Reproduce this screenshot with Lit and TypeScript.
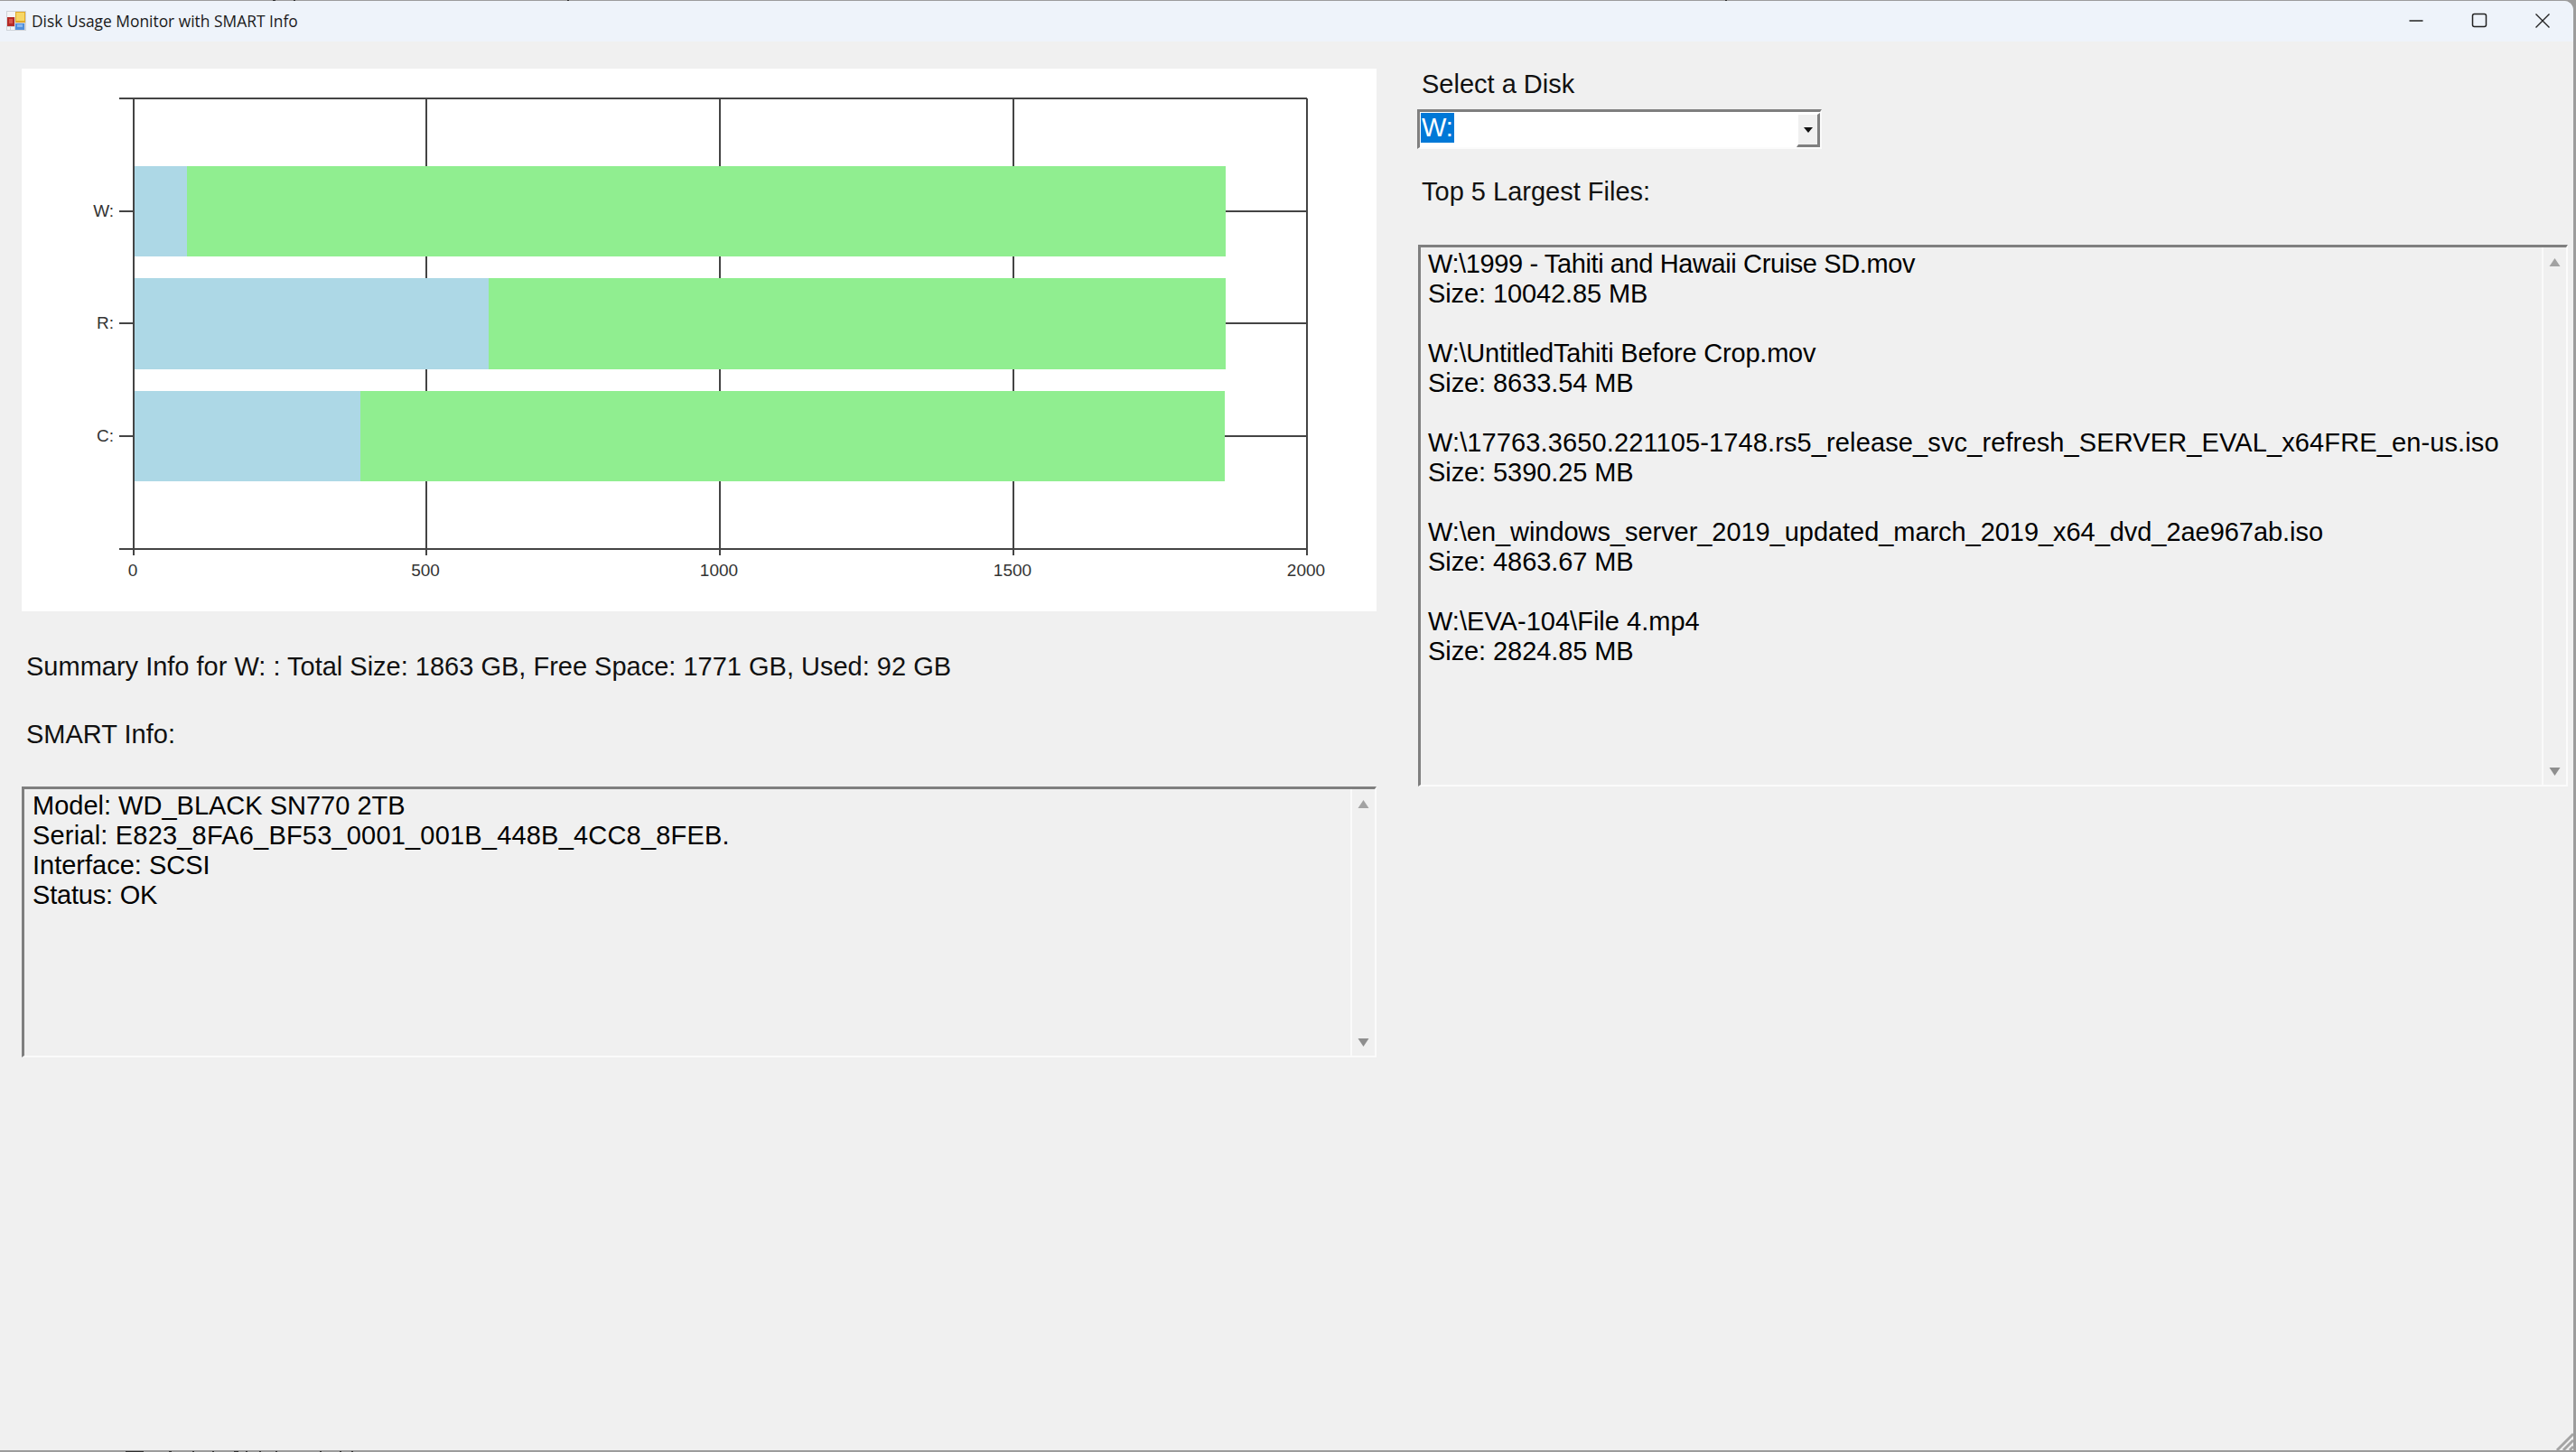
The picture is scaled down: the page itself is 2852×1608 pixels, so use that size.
import { LitElement, html, css, svg } from "lit";
import { customElement } from "lit/decorators.js";

type Line = [string, number];
const FILES: Line[][] = [
  [["W:\\1999 - Tahiti and Hawaii Cruise SD.mov", -0.39], ["Size: 10042.85 MB", -0.1]],
  [["W:\\UntitledTahiti Before Crop.mov", -0.21], ["Size: 8633.54 MB", -0.08]],
  [["W:\\17763.3650.221105-1748.rs5_release_svc_refresh_SERVER_EVAL_x64FRE_en-us.iso", 0.12], ["Size: 5390.25 MB", -0.08]],
  [["W:\\en_windows_server_2019_updated_march_2019_x64_dvd_2ae967ab.iso", -0.05], ["Size: 4863.67 MB", -0.08]],
  [["W:\\EVA-104\\File 4.mp4", 0.02], ["Size: 2824.85 MB", -0.08]],
];
const SMART: Line[] = [
  ["Model: WD_BLACK SN770 2TB", 0],
  ["Serial: E823_8FA6_BF53_0001_001B_448B_4CC8_8FEB.", 0.19],
  ["Interface: SCSI", 0],
  ["Status: OK", -0.2],
];
const DISKS = [
  { n: "W:", y: 108, h: 100, used: 58, total: 1208 },
  { n: "R:", y: 232, h: 101, used: 392, total: 1208 },
  { n: "C:", y: 357, h: 100, used: 250, total: 1207 },
];
const X0 = 124, W = 1299, TOP = 33, BOT = 532;
const BOTTOM_BITS = [[139, 20], [187, 3], [213, 2], [235, 2], [259, 5], [272, 2], [287, 2], [305, 2], [354, 2], [376, 2], [389, 2]];
const TOP_BITS = [[302, 3], [325, 2], [628, 2], [1910, 2]];

@customElement("app-root")
export class AppRoot extends LitElement {
  static styles = css`
    :host { display: block; position: relative; height: 1608px; background: #9c9c9c; overflow: hidden; font-family: "Liberation Sans", Arial, sans-serif; color: #000; }
    .window { width: 2849px; height: 1605px; margin-top: 1px; background: #f0f0f0; border-top-right-radius: 10px; display: flex; flex-direction: column; overflow: hidden; position: relative; }
    .titlebar { box-sizing: border-box; height: 45px; flex: none; background: #eef3fa; display: flex; align-items: center; padding: 0 0 1px 7px; }
    .app-icon { width: 22px; height: 22px; flex: none; }
    .title { font: 17.4px "Open Sans", sans-serif; color: #1a1a1a; margin-left: 6px; flex: 1; white-space: nowrap; }
    .caps { display: flex; align-items: center; margin-right: -1px; }
    .cap { width: 70px; height: 44px; display: flex; align-items: center; justify-content: center; }
    .cap svg { width: 18px; height: 18px; }
    .body { flex: 1; display: grid; grid-template-columns: 1500px 1273px; column-gap: 46px; padding: 30px 0 0 24px; align-items: start; }
    .left, .right { display: flex; flex-direction: column; }
    .chart { display: block; width: 1500px; height: 601px; background: #fff; }
    .chart text { font: 19px "Liberation Sans", sans-serif; fill: #333; }
    .axis { stroke: #444; stroke-width: 2; }
    .label { font-size: 29px; line-height: 33px; white-space: nowrap; color: #111; }
    .summary { margin: 45px 0 0 5px; }
    .smart-label { margin: 42px 0 0 5px; }
    .box { position: relative; box-sizing: border-box; background: #f0f0f0; border-top: 3px solid #7f7f7f; border-left: 3px solid #7f7f7f; border-right: 2px solid #fbfbfb; border-bottom: 2px solid #fbfbfb; font-size: 29px; line-height: 33px; white-space: pre; color: #000; overflow: hidden; display: flex; }
    .smart-box { margin-top: 41px; height: 300px; }
    .files-box { margin-top: 42px; height: 600px; }
    .box-text { flex: 1; padding: 2px 0 0 8px; min-width: 0; }
    .smart-box .box-text { padding-left: 9px; }
    .line { display: block; height: 33px; }
    .sb { flex: none; width: 27px; border-left: 2px solid #fafafa; display: flex; flex-direction: column; justify-content: space-between; align-items: center; padding: 11px 0 9px; box-sizing: border-box; }
    .sb svg { width: 13px; height: 11px; display: block; }
    .select-label { margin: 1px 0 0 4px; }
    .combo { margin: 11px 0 0 -1px; box-sizing: border-box; width: 448px; height: 44px; background: #fff; border-top: 3px solid #7f7f7f; border-left: 3px solid #7f7f7f; border-right: 2px solid #fbfbfb; border-bottom: 2px solid #fbfbfb; display: flex; padding: 1px 0 0 1px; justify-content: space-between; }
    .sel { background: #0078d7; color: #fff; font-size: 29px; height: 33px; line-height: 33px; padding: 0 1px; }
    .drop { box-sizing: border-box; width: 26px; height: 38px; background: #f0f0f0; border-left: 2px solid #fff; border-top: 2px solid #fff; border-right: 3px solid #7f7f7f; border-bottom: 3px solid #7f7f7f; display: flex; align-items: center; justify-content: center; }
    .drop svg { width: 10px; height: 6px; }
    .top5 { margin: 31px 0 0 4px; }
    .grip { position: absolute; right: 0; bottom: 0; width: 22px; height: 22px; }
    .peek { position: absolute; left: 0; width: 2852px; height: 1px; display: block; }
    .peek-top { top: 0; }
    .peek-bottom { bottom: 0; }
  `;

  private arrow(up: boolean) {
    return html`<svg viewBox="0 0 13 11"><path fill="${up ? "#a2a2a2" : "#8e8e8e"}" d="${up ? "M6.5 1 L12.5 10 L.5 10 Z" : "M.5 1 L12.5 1 L6.5 10 Z"}" /></svg>`;
  }

  private scrollbar() {
    return html`<div class="sb">${this.arrow(true)}${this.arrow(false)}</div>`;
  }

  private line(l: Line) {
    return html`<span class="line" style="letter-spacing:${l[1]}px">${l[0]}</span>`;
  }

  private chart() {
    const ticks = [0, 500, 1000, 1500, 2000];
    return html`<svg class="chart" viewBox="0 0 1500 601">
      ${ticks.map((t) => {
        const x = Math.floor(X0 + (W * t) / 2000);
        return svg`<line class="axis" x1=${x} x2=${x} y1=${TOP} y2=${BOT + 7} />
          <text x=${x - 1} y=${562} text-anchor="middle">${t}</text>`;
      })}
      <line class="axis" x1="108" x2=${X0 + W} y1=${TOP} y2=${TOP} />
      <line class="axis" x1="108" x2=${X0 + W} y1=${BOT} y2=${BOT} />
      ${DISKS.map((d) => {
        const cy = d.y + Math.floor(d.h / 2);
        return svg`<line class="axis" x1="108" x2=${X0 + W} y1=${cy} y2=${cy} />
          <text x="102" y=${cy + 6} text-anchor="end">${d.n}</text>
          <rect x=${X0 + 1} y=${d.y} width=${d.used} height=${d.h} fill="#add8e6" />
          <rect x=${X0 + 1 + d.used} y=${d.y} width=${d.total - d.used} height=${d.h} fill="#90ee90" />`;
      })}
    </svg>`;
  }

  private peek(bits: number[][], cls: string) {
    return html`<svg class="peek ${cls}" viewBox="0 0 2852 1">
      ${bits.map((b) => svg`<rect x=${b[0]} y="0" width=${b[1]} height="1" fill="#2e2e2e" />`)}
    </svg>`;
  }

  render() {
    return html`<div class="window">
      <div class="titlebar">
        <svg class="app-icon" viewBox="0 0 22 22">
          <rect width="22" height="22" fill="#cfd3d9" />
          <rect x="1" y="1" width="9" height="6" fill="#f4f4f4" />
          <rect x="10" y="1" width="11" height="12" fill="#e0a92a" />
          <rect x="11" y="2" width="9" height="9" fill="#f7d765" />
          <rect x="1" y="7" width="8" height="10" fill="#b52a26" />
          <rect x="3" y="9" width="4" height="5" fill="#d9534a" />
          <rect x="10" y="14" width="10" height="7" fill="#4f8fdc" />
          <rect x="12" y="15" width="6" height="3" fill="#8bb8ee" />
          <rect x="1" y="18" width="3" height="3" fill="#f4f4f4" />
          <rect x="5" y="18" width="4" height="3" fill="#f4f4f4" />
        </svg>
        <div class="title">Disk Usage Monitor with SMART Info</div>
        <div class="caps">
          <div class="cap"><svg viewBox="0 0 18 18"><path d="M1.5 9h15" stroke="#222" stroke-width="1.3" fill="none" /></svg></div>
          <div class="cap"><svg viewBox="0 0 18 18"><rect x="1.5" y="1.5" width="15" height="14" rx="2" stroke="#222" stroke-width="1.5" fill="none" /></svg></div>
          <div class="cap"><svg viewBox="0 0 18 18"><path d="M1.5 1.5l15 15M16.5 1.5l-15 15" stroke="#222" stroke-width="1.4" fill="none" /></svg></div>
        </div>
      </div>
      <div class="body">
        <div class="left">
          ${this.chart()}
          <div class="label summary">Summary Info for W: : Total Size: 1863 GB, Free Space: 1771 GB, Used: 92 GB</div>
          <div class="label smart-label">SMART Info:</div>
          <div class="box smart-box">
            <div class="box-text">${SMART.map((l) => this.line(l))}</div>
            ${this.scrollbar()}
          </div>
        </div>
        <div class="right">
          <div class="label select-label">Select a Disk</div>
          <div class="combo">
            <span class="sel">W:</span>
            <div class="drop"><svg viewBox="0 0 10 6"><path d="M0 0h10L5 6z" fill="#111" /></svg></div>
          </div>
          <div class="label top5">Top 5 Largest Files:</div>
          <div class="box files-box">
            <div class="box-text">${FILES.map((f) => html`${this.line(f[0])}${this.line(f[1])}<span class="line"></span>`)}</div>
            ${this.scrollbar()}
          </div>
        </div>
      </div>
      <svg class="grip" viewBox="0 0 22 22">
        <path d="M22 4 L4 22 M22 11 L11 22 M22 18 L18 22" stroke="#a4a4a4" stroke-width="3" fill="none" />
      </svg>
    </div>
    ${this.peek(TOP_BITS, "peek-top")}
    ${this.peek(BOTTOM_BITS, "peek-bottom")}`;
  }
}
